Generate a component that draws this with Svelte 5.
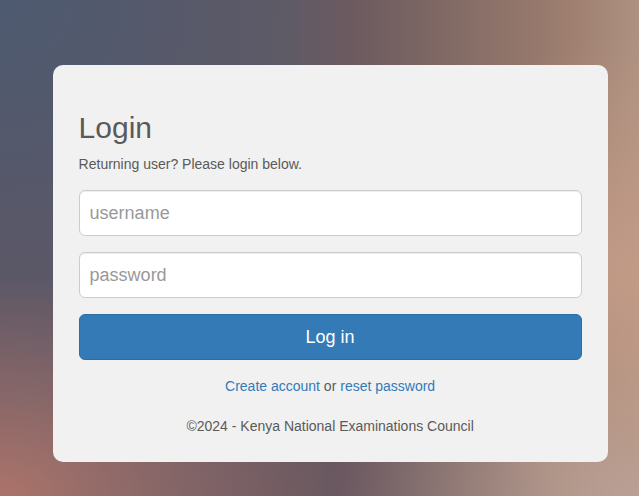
<script>
  let username = $state('')
  let password = $state('')
</script>

<main class="page">
  <form class="card" on:submit|preventDefault>
    <h2>Login</h2>
    <p class="intro">Returning user? Please login below.</p>
    <input class="field" type="text" placeholder="username" bind:value={username} />
    <input class="field" type="password" placeholder="password" bind:value={password} />
    <button type="submit">Log in</button>
    <p class="links"><a href="#create">Create account</a> or <a href="#reset">reset password</a></p>
    <p class="copy">©2024 - Kenya National Examinations Council</p>
  </form>
</main>

<style>
  :global(body) {
    margin: 0;
    font-family: "Liberation Sans", Arial, sans-serif;
    font-size: 14px;
    line-height: 1.42857;
    color: #5a5a5a;
  }

  .page {
    box-sizing: border-box;
    height: 496px;
    padding: 65px 31.4px 34px 52.6px;
    overflow: hidden;
    background:
      radial-gradient(ellipse 330px 220px at 0% 100%, rgba(172, 116, 106, 1), rgba(172, 116, 106, 0)),
      radial-gradient(ellipse 240px 240px at 100% 55%, rgba(194, 155, 134, 1), rgba(194, 155, 134, 0)),
      radial-gradient(ellipse 300px 170px at 100% 100%, rgba(184, 160, 150, 1), rgba(184, 160, 150, 0)),
      radial-gradient(ellipse 240px 160px at 50% 100%, rgba(107, 88, 96, 1), rgba(107, 88, 96, 0)),
      radial-gradient(ellipse 300px 300px at 0% 0%, rgba(77, 90, 112, 1), rgba(77, 90, 112, 0)),
      linear-gradient(90deg, #5c5766 0%, #5f5a66 45%, #6c5a60 55%, #846c66 72%, #9c7d6e 88%, #ae9181 100%);
  }

  .card {
    box-sizing: border-box;
    height: 397px;
    padding: 45px 26px 0;
    background: #f1f1f1;
    border-radius: 10px;
    display: flex;
    flex-direction: column;
  }

  h2 {
    margin: 0 0 8px;
    font-size: 30px;
    font-weight: 500;
    line-height: 36px;
  }

  .intro {
    margin: 0 0 16px;
    line-height: 20px;
  }

  .field {
    box-sizing: border-box;
    width: 100%;
    height: 46px;
    margin-bottom: 16px;
    padding: 10px;
    font: inherit;
    font-size: 18px;
    color: #555;
    background: #fff;
    border: 1px solid #ccc;
    border-radius: 6px;
    box-shadow: inset 0 1px 1px rgba(0, 0, 0, 0.075);
    outline: none;
  }

  .field::placeholder {
    color: #999;
    opacity: 1;
  }

  button {
    height: 46px;
    padding: 2px 0 0;
    font: inherit;
    font-size: 18px;
    color: #fff;
    background: #337ab7;
    border: 1px solid #2e6da4;
    border-radius: 6px;
  }

  .links {
    margin: 16px 0 0;
    line-height: 20px;
    text-align: center;
  }

  a {
    color: #337ab7;
    text-decoration: none;
  }

  .copy {
    margin: 20px 0 0;
    line-height: 20px;
    text-align: center;
  }
</style>
